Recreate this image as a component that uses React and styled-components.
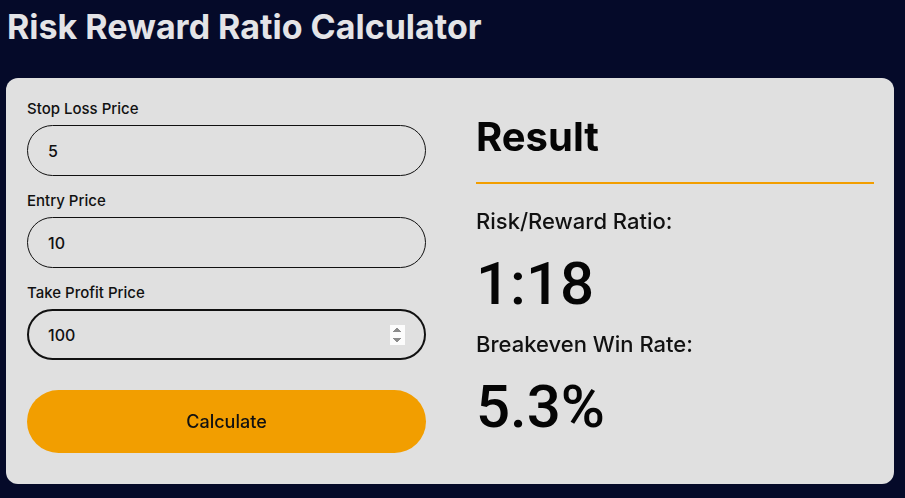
import React from "react";
import styled, { createGlobalStyle } from "styled-components";

const Global = createGlobalStyle`
  html, body { margin: 0; padding: 0; background: #050a29; }
  body { font-family: Inter, "Noto Sans", sans-serif; }
  * { box-sizing: border-box; }
`;

const Page = styled.div`
  padding: 6px 11px 14px 6px;
  min-height: 498px;
  background: #050a29;
`;

const Title = styled.h1`
  margin: 0 0 31px 1px;
  color: #e4e4e7;
  font-size: 34px;
  font-weight: 700;
  line-height: 41px;
`;

const Card = styled.div`
  background: #e0e0e0;
  border-radius: 12px;
  padding: 22px 20px 31px 21px;
  display: grid;
  grid-template-columns: 399px 1fr;
  column-gap: 50px;
`;

const Form = styled.div`
  display: flex;
  flex-direction: column;
`;

const Field = styled.div`
  display: flex;
  flex-direction: column;
  margin-bottom: 16px;
`;

const Label = styled.label`
  font-size: 15px;
  font-weight: 500;
  color: #111;
  line-height: 18px;
  margin-bottom: 7px;
`;

const Input = styled.input`
  height: 51px;
  width: 100%;
  border-radius: 26px;
  border: ${(p) => (p.$active ? "2px solid #111" : "1px solid #111")};
  background: #e0e0e0;
  padding: 0 ${(p) => (p.$active ? "19px" : "20px")};
  font-family: Inter, sans-serif;
  font-size: 16px;
  font-weight: 500;
  color: #111;
  outline: none;
`;

const Button = styled.button`
  margin-top: 14px;
  height: 63px;
  width: 100%;
  border: none;
  border-radius: 32px;
  background: #f29e00;
  font-family: Inter, sans-serif;
  font-size: 18px;
  font-weight: 500;
  color: #111;
`;

const Results = styled.div`
  display: flex;
  flex-direction: column;
`;

const ResultTitle = styled.h2`
  margin: 13px 0 0 0;
  font-size: 40px;
  font-weight: 700;
  line-height: 48px;
  color: #050505;
`;

const Divider = styled.hr`
  margin: 21px 0 0 0;
  border: none;
  height: 2px;
  background: #f29e00;
`;

const StatLabel = styled.div`
  margin-top: ${(p) => p.$top}px;
  font-size: 22px;
  font-weight: 500;
  color: #111;
  line-height: 26px;
`;

const StatValue = styled.div`
  margin-top: ${(p) => p.$top}px;
  font-family: Roboto, Inter, sans-serif;
  font-size: 60px;
  font-weight: 500;
  color: #050505;
  line-height: 70px;
`;

export default function App() {
  return (
    <>
      <Global />
      <Page>
        <Title>Risk Reward Ratio Calculator</Title>
        <Card>
          <Form>
            <Field>
              <Label>Stop Loss Price</Label>
              <Input type="number" defaultValue="5" />
            </Field>
            <Field>
              <Label>Entry Price</Label>
              <Input type="number" defaultValue="10" />
            </Field>
            <Field>
              <Label>Take Profit Price</Label>
              <Input type="number" defaultValue="100" $active autoFocus />
            </Field>
            <Button>Calculate</Button>
          </Form>
          <Results>
            <ResultTitle>Result</ResultTitle>
            <Divider />
            <StatLabel $top={24}>Risk/Reward Ratio:</StatLabel>
            <StatValue $top={15}>1:18</StatValue>
            <StatLabel $top={12}>Breakeven Win Rate:</StatLabel>
            <StatValue $top={15}>5.3%</StatValue>
          </Results>
        </Card>
      </Page>
    </>
  );
}
